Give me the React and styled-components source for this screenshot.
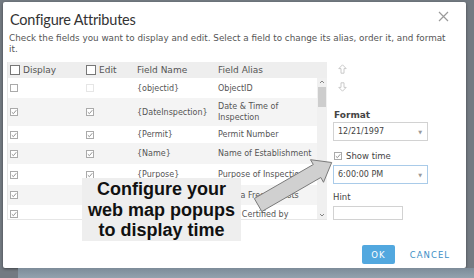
import React from 'react';
import styled, { createGlobalStyle } from 'styled-components';

const GlobalStyle = createGlobalStyle`
  html, body { margin: 0; padding: 0; }
  body { background: #737a82; font-family: "DejaVu Sans", Verdana, sans-serif; }
`;

const Page = styled.div`
  position: relative;
  width: 474px;
  height: 278px;
  overflow: hidden;
  background: #737a82;
  display: flex;
  flex-direction: column;
`;

const Dialog = styled.div`
  width: 463px;
  height: 266px;
  margin: 2px 0 0 3px;
  background: #fff;
  border-radius: 2px;
  box-shadow: 0 1px 3px rgba(0, 0, 0, 0.45);
  display: flex;
  flex-direction: column;
  box-sizing: border-box;
`;

const BottomStrip = styled.div`
  height: 10px;
  margin-left: 18px;
  background: linear-gradient(#7d8c99, #93a2ae);
`;

const Header = styled.div`
  display: flex;
  justify-content: space-between;
  align-items: flex-start;
  height: 31px;
  padding: 8px 17px 0 7px;
  box-sizing: border-box;
`;

const Title = styled.h1`
  margin: 0;
  font-family: Lato, "Open Sans", sans-serif;
  font-weight: 400;
  font-size: 14.5px;
  letter-spacing: -0.2px;
  line-height: 20px;
  color: #333;
`;

const Close = styled.svg`
  margin-top: 1px;
`;

const Desc = styled.p`
  margin: 0 0 7px;
  padding: 0 6px;
  height: 22px;
  font-size: 8.8px;
  line-height: 11px;
  color: #555;
`;

const Body = styled.div`
  display: flex;
  align-items: flex-start;
  padding-left: 4px;
`;

const TableBox = styled.div`
  width: 320px;
  height: 158px;
  border-left: 1px solid #e6e6e6;
  border-bottom: 1px solid #e6e6e6;
  box-sizing: border-box;
  display: flex;
  flex-direction: column;
  overflow: hidden;
`;

const Cols = `
  display: grid;
  grid-template-columns: 76px 51px 81px 1fr;
`;

const HeadRow = styled.div`
  ${Cols}
  height: 16px;
  align-items: center;
  background: #eeeeee;
  font-family: "DejaVu Sans", Verdana, sans-serif;
  font-size: 9px;
  color: #555;
`;

const HeadCell = styled.div`
  display: flex;
  align-items: center;
  gap: 3px;
  padding-left: 2px;
`;

const Scroller = styled.div`
  display: flex;
  flex: 1;
  min-height: 0;
`;

const Rows = styled.div`
  flex: 1;
  overflow: hidden;
`;

const Row = styled.div`
  ${Cols}
  height: ${(p) => p.$h}px;
  align-items: center;
  background: ${(p) => (p.$alt ? '#f4f4f4' : '#fff')};
  font-size: 8px;
  line-height: 11px;
  color: #555;
`;

const Cell = styled.div`
  display: flex;
  align-items: center;
  padding-left: 2px;
  white-space: nowrap;
`;

const Box = styled.span`
  display: inline-flex;
  align-items: center;
  justify-content: center;
  width: ${(p) => p.$size}px;
  height: ${(p) => p.$size}px;
  box-sizing: border-box;
  border: 1px solid ${(p) => (p.$disabled ? '#e6e6e6' : p.$dark ? '#777' : '#aaa')};
  background: #fff;
  flex-shrink: 0;
`;

const ScrollBar = styled.div`
  width: 10px;
  background: #f0f0f0;
  display: flex;
  flex-direction: column;
  align-items: center;
`;

const Thumb = styled.div`
  width: 8px;
  height: 20px;
  background: #cdcdcd;
  margin-top: 1px;
`;

const Spacer = styled.div`
  flex: 1;
`;

const Side = styled.div`
  width: 95px;
  margin-left: 6px;
  display: flex;
  flex-direction: column;
`;

const Movers = styled.div`
  display: flex;
  flex-direction: column;
  gap: 8px;
  padding: 2px 0 0 5px;
`;

const Label = styled.div`
  font-size: ${(p) => (p.$bold ? 9 : 8.5)}px;
  line-height: 11px;
  color: #444;
  font-weight: ${(p) => (p.$bold ? 700 : 400)};
  margin: ${(p) => p.$m};
`;

const Select = styled.div`
  height: 19px;
  box-sizing: border-box;
  border: 1px solid ${(p) => (p.$focus ? '#a9cbe9' : '#d2d2d2')};
  display: flex;
  align-items: center;
  justify-content: space-between;
  padding: 0 5px 0 4px;
  font-size: 8px;
  color: #444;
  margin-top: ${(p) => p.$mt}px;
`;

const Caret = styled.span`
  font-size: 5px;
  color: #999;
`;

const CheckLine = styled.div`
  display: flex;
  align-items: center;
  gap: 4px;
  height: 11px;
  margin: 9px 0 0 1px;
  font-size: 8.5px;
  color: #444;
`;

const Input = styled.div`
  width: 70px;
  height: 14px;
  box-sizing: border-box;
  border: 1px solid #d2d2d2;
  margin-top: 3px;
`;

const Footer = styled.div`
  margin-top: auto;
  display: flex;
  justify-content: flex-end;
  align-items: center;
  gap: 15px;
  padding: 0 16px 4px 0;
`;

const OkButton = styled.button`
  width: 33px;
  height: 19px;
  border: 0;
  border-radius: 2px;
  background: #52a8df;
  color: #fff;
  font-family: "DejaVu Sans", Verdana, sans-serif;
  font-size: 8.5px;
  letter-spacing: 1px;
  padding: 0;
`;

const CancelButton = styled.button`
  border: 0;
  background: none;
  color: #3d8fc6;
  font-family: "DejaVu Sans", Verdana, sans-serif;
  font-size: 8.5px;
  letter-spacing: 1px;
  padding: 0;
`;

const Callout = styled.div`
  position: absolute;
  left: 82px;
  top: 178px;
  width: 159px;
  height: 63px;
  background: #eeeeee;
  text-align: center;
  font-family: "Liberation Sans", Arial, sans-serif;
  font-weight: 700;
  font-size: 18px;
  line-height: 20.5px;
  color: #111;
  box-sizing: border-box;
  padding-top: 1px;
`;

const ArrowLayer = styled.svg`
  position: absolute;
  left: 0;
  top: 0;
  pointer-events: none;
`;

function Check({ checked, size = 8, dark, disabled }) {
  return (
    <Box $size={size} $dark={dark} $disabled={disabled}>
      {checked && (
        <svg width="6" height="6" viewBox="0 0 6 6">
          <path d="M0.8 3.2 L2.4 4.7 L5.3 1.2" fill="none" stroke="#888" strokeWidth="0.9" />
        </svg>
      )}
    </Box>
  );
}

function MoveArrow({ down }) {
  return (
    <svg width="9" height="10" viewBox="0 0 9 10" style={down ? { transform: 'rotate(180deg)' } : undefined}>
      <path d="M4.5 0.8 L8.2 4.6 L6 4.6 L6 9.2 L3 9.2 L3 4.6 L0.8 4.6 Z" fill="#fff" stroke="#c4c4c4" strokeWidth="0.9" />
    </svg>
  );
}

const rows = [
  { name: '{objectid}', alias: 'ObjectID', display: false, edit: false, disabled: true, h: 20 },
  { name: '{DateInspection}', alias: <>Date &amp; Time of<br />Inspection</>, display: true, edit: true, h: 28 },
  { name: '{Permit}', alias: 'Permit Number', display: true, edit: true, h: 17 },
  { name: '{Name}', alias: 'Name of Establishment', display: true, edit: true, h: 21 },
  { name: '{Purpose}', alias: 'Purpose of Inspection', display: true, edit: true, h: 21 },
  { name: '{AreaFree}', alias: 'Is Area Free of Pests', display: true, edit: true, h: 20 },
  { name: '{Certified}', alias: 'Staff: Certified by', display: true, edit: true, h: 18 },
];

export default function App() {
  return (
    <>
      <GlobalStyle />
      <Page>
        <Dialog>
          <Header>
            <Title>Configure Attributes</Title>
            <Close width="11" height="11" viewBox="0 0 11 11">
              <path d="M1 1 L10 10 M10 1 L1 10" stroke="#9a9a9a" strokeWidth="1.2" />
            </Close>
          </Header>
          <Desc>
            Check the fields you want to display and edit. Select a field to change its alias, order it, and format
            <br />
            it.
          </Desc>
          <Body>
            <TableBox>
              <HeadRow>
                <HeadCell><Check size={10} dark />Display</HeadCell>
                <HeadCell><Check size={10} dark />Edit</HeadCell>
                <HeadCell>Field Name</HeadCell>
                <HeadCell>Field Alias</HeadCell>
              </HeadRow>
              <Scroller>
                <Rows>
                  {rows.map((r, i) => (
                    <Row key={i} $h={r.h} $alt={i % 2 === 1}>
                      <Cell><Check checked={r.display} /></Cell>
                      <Cell><Check checked={r.edit} disabled={r.disabled} /></Cell>
                      <Cell>{r.name}</Cell>
                      <Cell>{r.alias}</Cell>
                    </Row>
                  ))}
                </Rows>
                <ScrollBar>
                  <svg width="8" height="8" viewBox="0 0 8 8">
                    <path d="M2 5 L4 3 L6 5" fill="none" stroke="#777" strokeWidth="0.9" />
                  </svg>
                  <Thumb />
                  <Spacer />
                  <svg width="8" height="8" viewBox="0 0 8 8">
                    <path d="M2 3 L4 5 L6 3" fill="none" stroke="#777" strokeWidth="0.9" />
                  </svg>
                </ScrollBar>
              </Scroller>
            </TableBox>
            <Side>
              <Movers>
                <MoveArrow />
                <MoveArrow down />
              </Movers>
              <Label $bold $m="18px 0 0 1px">Format</Label>
              <Select $mt={1}>12/21/1997<Caret>▼</Caret></Select>
              <CheckLine><Check checked />Show time</CheckLine>
              <Select $mt={4} $focus>6:00:00 PM<Caret>▼</Caret></Select>
              <Label $m="8px 0 0 0">Hint</Label>
              <Input />
            </Side>
          </Body>
          <Footer>
            <OkButton>OK</OkButton>
            <CancelButton>CANCEL</CancelButton>
          </Footer>
        </Dialog>
        <BottomStrip />
        <Callout>
          Configure your
          <br />
          web map popups
          <br />
          to display time
        </Callout>
        <ArrowLayer width="474" height="278" viewBox="0 0 474 278">
          <polygon
            points="254.3,198.5 313.3,164.5 310.5,159.7 331.7,162.5 323.5,182.3 320.8,177.5 261.8,211.5"
            fill="#d0d0d0"
            stroke="#7a7a7a"
            strokeWidth="1"
          />
        </ArrowLayer>
      </Page>
    </>
  );
}
